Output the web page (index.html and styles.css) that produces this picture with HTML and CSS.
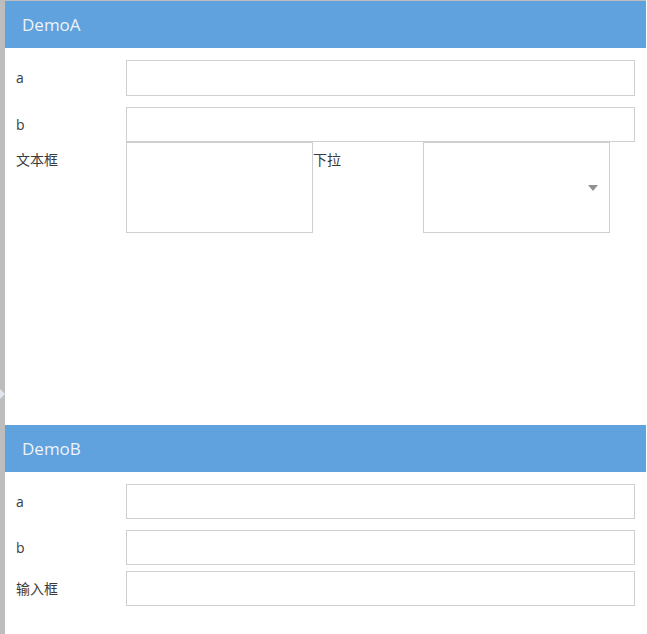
FILE: index.html
```html
<!DOCTYPE html>
<html>
<head>
<meta charset="utf-8">
<link rel="stylesheet" href="styles.css">
</head>
<body>
<div class="frame">
  <div class="splitter-handle"></div>
  <section class="panel panel-a">
    <div class="panel-header">DemoA</div>
    <div class="panel-body">
      <div class="row row-first">
        <label class="lbl">a</label>
        <div class="field field-wide"></div>
      </div>
      <div class="row row-b">
        <label class="lbl">b</label>
        <div class="field field-wide field-short"></div>
      </div>
      <div class="row row-tall">
        <label class="lbl">文本框</label>
        <div class="field field-box"></div>
        <label class="lbl lbl-inline">下拉</label>
        <div class="field field-box field-select"><span class="arrow"></span></div>
      </div>
    </div>
  </section>
  <section class="panel panel-b">
    <div class="panel-header">DemoB</div>
    <div class="panel-body">
      <div class="row row-first">
        <label class="lbl">a</label>
        <div class="field field-wide field-short"></div>
      </div>
      <div class="row row-b2">
        <label class="lbl">b</label>
        <div class="field field-wide field-short"></div>
      </div>
      <div class="row row-c">
        <label class="lbl">输入框</label>
        <div class="field field-wide field-short"></div>
      </div>
    </div>
  </section>
</div>
</body>
</html>
```
FILE: styles.css
```css
html, body {
  margin: 0;
  padding: 0;
  background: #ffffff;
}
body {
  font-family: "Open Sans", "Noto Sans CJK SC", sans-serif;
  color: #333333;
  height: 634px;
  overflow: hidden;
}
.frame {
  position: relative;
  width: 641px;
  height: 633px;
  border-left: 5px solid #bdbdbd;
  border-top: 1px solid #bdbdbd;
  background: #ffffff;
}
.splitter-handle {
  position: absolute;
  left: -5px;
  top: 388px;
  width: 0;
  height: 0;
  border-top: 5px solid transparent;
  border-bottom: 5px solid transparent;
  border-left: 5px solid #dfe6ee;
}
.panel-a {
  height: 424px;
}
.panel-header {
  height: 47px;
  background: #5fa2dd;
  color: #eef3fa;
  font-size: 17px;
  line-height: 47px;
  padding-left: 17px;
}
.panel-body {
  padding-left: 11px;
}
.row {
  display: flex;
  align-items: flex-start;
}
.row-first { margin-top: 12px; }
.row-b { margin-top: 11px; }
.row-b2 { margin-top: 11px; }
.row-c { margin-top: 6px; }
.lbl {
  width: 110px;
  flex: none;
  font-size: 14px;
  line-height: 36px;
  height: 35px;
  color: #3a3a3a;
}
.lbl-inline {
  line-height: 36px;
}
.field {
  box-sizing: border-box;
  border: 1px solid #cfcfcf;
  background: #ffffff;
}
.field-wide {
  width: 509px;
  height: 36px;
}
.field-short {
  height: 35px;
}
.field-box {
  width: 187px;
  height: 91px;
}
.field-select {
  display: flex;
  align-items: center;
  justify-content: flex-end;
  padding-right: 11px;
}
.arrow {
  width: 0;
  height: 0;
  border-left: 5px solid transparent;
  border-right: 5px solid transparent;
  border-top: 6px solid #919191;
}
```
